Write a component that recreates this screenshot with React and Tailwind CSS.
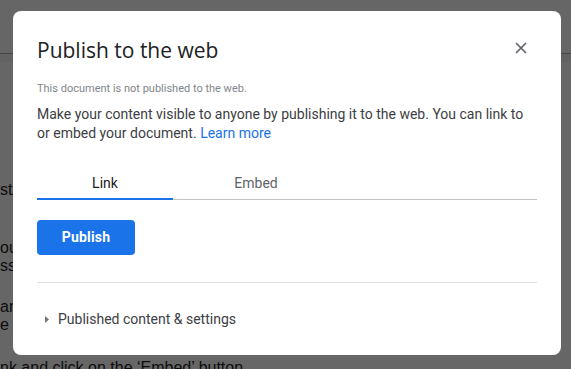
const pageLines = [
  { top: "mt-[119px]", text: "st/d/1xYz_document-link/pub" },
  { top: "mt-[40px]", text: "ou can copy the link from the dialog" },
  { top: "mt-0", text: "ss the link to anyone who needs it" },
  { top: "mt-[23px]", text: "and you can also open the settings" },
  { top: "mt-0", text: "e link to the published document" },
  { top: "mt-[25px]", text: "nk and click on the ‘Embed’ button." },
];

function CloseIcon() {
  return (
    <svg width="12" height="12" viewBox="0 0 12 12" fill="none">
      <path d="M1 1L11 11M11 1L1 11" stroke="#5f6368" strokeWidth="1.7" />
    </svg>
  );
}

export default function App() {
  return (
    <div className="relative h-[369px] w-[571px] overflow-hidden bg-white font-['Roboto',sans-serif]">
      {/* page behind the dialog */}
      <div className="flex flex-col">
        <div className="mt-[53px] h-[9px] border-t border-[#b0b0b0] bg-[#f5f5f5]" />
        {pageLines.map((l, i) => (
          <div
            key={i}
            className={`${l.top} whitespace-nowrap font-['Liberation_Sans',sans-serif] text-[16px] leading-[18px] text-[#222]`}
          >
            {l.text}
          </div>
        ))}
      </div>

      {/* overlay */}
      <div className="absolute inset-0 bg-black/60" />

      {/* dialog */}
      <div className="absolute left-[13px] top-[11px] h-[344px] w-[548px] rounded-[8px] bg-white px-[24px] pt-[24px]">
        <div className="flex items-start justify-between">
          <h1 className="pt-[1px] font-['Open_Sans',sans-serif] text-[21px] leading-[28px] text-[#202124]">
            Publish to the web
          </h1>
          <button className="mr-[10px] mt-[7px] flex h-[12px] w-[12px] items-center justify-center">
            <CloseIcon />
          </button>
        </div>

        <p className="mt-[18px] text-[11px] leading-[14px] text-[#80868b]">
          This document is not published to the web.
        </p>
        <p className="mt-[9px] text-[14px] leading-[19px] text-[#3c4043]">
          Make your content visible to anyone by publishing it to the web. You can link to
          or embed your document.{" "}
          <span className="text-[#1a73e8]">Learn more</span>
        </p>

        <div className="mt-[31px] flex border-b border-[#c4c4c4]">
          <div className="relative w-[136px] pb-[7px] text-center text-[14px] leading-[18px] text-[#202124]">
            Link
            <div className="absolute bottom-[-1px] left-0 h-[2px] w-full bg-[#1a73e8]" />
          </div>
          <div className="w-[166px] pb-[7px] text-center text-[14px] leading-[18px] text-[#5f6368]">
            Embed
          </div>
        </div>

        <button className="mt-[20px] h-[35px] w-[98px] rounded-[4px] bg-[#1a73e8] text-[14px] font-bold tracking-[0.2px] text-white">
          Publish
        </button>

        <div className="mt-[27px] h-px w-full bg-[#e0e0e0]" />

        <div className="mt-[26px] flex items-center gap-[9px] pl-[8px]">
          <svg width="4" height="7" viewBox="0 0 4 7">
            <path d="M0 0L4 3.5L0 7Z" fill="#757575" />
          </svg>
          <span className="text-[14px] leading-[20px] text-[#3c4043]">
            Published content &amp; settings
          </span>
        </div>
      </div>
    </div>
  );
}
